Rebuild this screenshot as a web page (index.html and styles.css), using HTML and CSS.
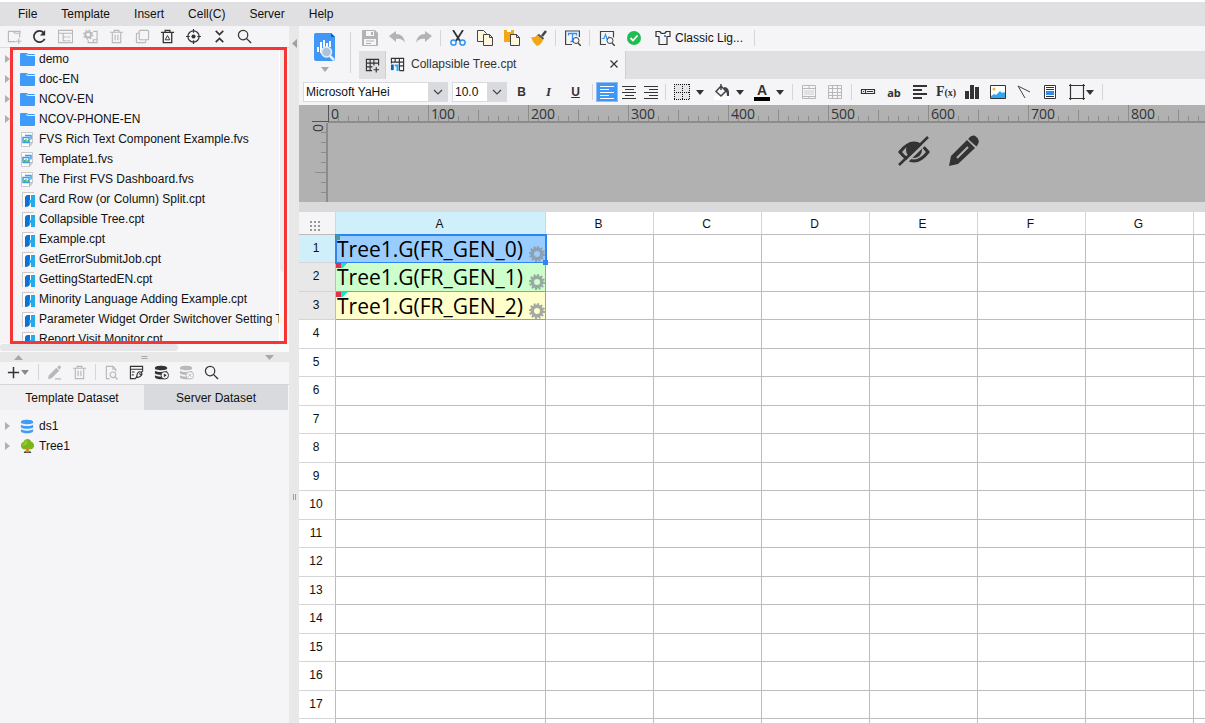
FILE: index.html
```
<!DOCTYPE html>
<html lang="en">
<head>
  <meta charset="UTF-8">
  <meta name="viewport" content="width=device-width, initial-scale=1.0">
  <title>Report Designer</title>
  <link rel="stylesheet" href="styles.css">
</head>
<body>
  <!-- shared icons -->
  <svg class="defs" width="0" height="0" aria-hidden="true">
    <symbol id="i-folder" viewBox="0 0 15 15"><path fill="#3f9bf9" d="M1 1h6l1 1h6q1 0 1 1v10q0 1-1 1H1q-1 0-1-1V2q0-1 1-1z"/><path stroke="#e8f2ff" fill="none" d="M6 2.500l2 1h7"/></symbol>
    <symbol id="i-fvs" viewBox="0 0 15 15"><path fill="#fff" stroke="#c9c9cb" d="M1.500.500h11v10l-3 4h-8z"/><path fill="#ddd" stroke="#bbb" d="M12.500 10.500h-3v4z"/><path fill="#fff" stroke="#38a1e8" stroke-width="1.500" d="M5 3.500h6v4M3 5.500h6v5H3z"/><path stroke="#51b351" stroke-width="1.300" d="M4.500 10V8M6 10V7M8 10V8"/></symbol>
    <symbol id="i-cpt" viewBox="0 0 15 15"><path fill="#fff" stroke="#c9c9cb" d="M14 .500H2.500V15"/><path fill="#0b73d1" d="M5 6q0-3 3-3h2v8q0 4-5 4z"/><path fill="#27a9ea" d="M11 3h4v12h-4v-4H9V8h2z"/></symbol>
    <symbol id="i-search" viewBox="0 0 16 16"><circle cx="6.500" cy="6.500" r="5" fill="none" stroke="currentColor" stroke-width="1.300"/><path stroke="currentColor" stroke-width="1.500" d="M10 10l5 5"/></symbol>
    <symbol id="i-trash" viewBox="0 0 16 16"><path fill="none" stroke="currentColor" stroke-width="1.200" d="M1 3.500h14M5.500 3V1.500h5V3M3.500 4v10.500h9V4M6.500 6v6M9.500 6v6"/></symbol>
    <symbol id="i-down" viewBox="0 0 8 5"><path fill="currentColor" d="M0 0h8L4 5z"/></symbol>
    <symbol id="i-chev" viewBox="0 0 10 6"><path fill="none" stroke="#444" stroke-width="1.200" d="M1 1l4 4 4-4"/></symbol>
    <symbol id="i-arrow" viewBox="0 0 5 8"><path fill="#b0b0b2" d="M0 0l5 4-5 4z"/></symbol>
    <symbol id="i-db" viewBox="0 0 16 16"><path fill="currentColor" d="M1 3c0-3 13-3 13 0v1c0 2-13 2-13 0zM1 6c2 2 11 2 13 0v3c-2 2-11 2-13 0zM1 11c2 2 11 2 13 0v2c-1 3-12 3-13 0z"/></symbol>
    <symbol id="i-gear" viewBox="0 0 16 16"><circle cx="8" cy="8" r="7" fill="none" stroke="#8d9599" stroke-width="2" stroke-dasharray="2 1.660" opacity=".8"/><circle cx="8" cy="8" r="4.700" fill="none" stroke="#8d9599" stroke-width="3.400" opacity=".8"/></symbol>
  </svg>

  <nav class="menubar">
    <button type="button">File</button>
    <button type="button">Template</button>
    <button type="button">Insert</button>
    <button type="button">Cell(C)</button>
    <button type="button">Server</button>
    <button type="button">Help</button>
  </nav>

  <div class="workspace">
    <aside class="sidebar">
      <div class="tree-tools">
        <button type="button" class="tool off" aria-label="New folder"><svg viewBox="0 0 16 16"><path fill="none" stroke="currentColor" stroke-width="1.200" d="M9 13.500H1.500v-11h5l2 2h5V9M6 2.500h8v2M12.500 10v6M9.500 13h6"/></svg></button>
        <button type="button" class="tool" aria-label="Refresh"><svg viewBox="0 0 16 16"><path fill="none" stroke="currentColor" stroke-width="1.800" d="M13.500 10.500A6 6 0 1 1 12.500 4"/><path fill="currentColor" d="M14 1v6H8.500z"/></svg></button>
        <button type="button" class="tool off" aria-label="Locate"><svg viewBox="0 0 16 16"><path fill="none" stroke="currentColor" stroke-width="1.200" d="M.5 1.500h15v13H.5zM1 4.500h14M5.500 5v7.500H9M6 8.500h3M10 8.500h3M10 12.500h3"/></svg></button>
        <button type="button" class="tool off" aria-label="Settings"><svg viewBox="0 0 16 16"><path fill="none" stroke="currentColor" stroke-width="1.200" d="M11 2.500h4v12H5.500V12M11 14.500v-3h3.500"/><circle cx="5.500" cy="6" r="3" fill="none" stroke="currentColor" stroke-width="2"/><circle cx="5.500" cy="6" r="4.700" fill="none" stroke="currentColor" stroke-width="1.600" stroke-dasharray="1.800 1.890"/></svg></button>
        <button type="button" class="tool off" aria-label="Delete"><svg><use href="#i-trash"/></svg></button>
        <button type="button" class="tool off" aria-label="Copy"><svg viewBox="0 0 16 16"><rect x="4.500" y="1.500" width="10" height="10" rx="1" fill="none" stroke="currentColor" stroke-width="1.200"/><path fill="none" stroke="currentColor" stroke-width="1.200" d="M4 4.500H2.500q-1 0-1 1v8q0 1 1 1h8q1 0 1-1V12"/></svg></button>
        <button type="button" class="tool" aria-label="Recycle bin"><svg viewBox="0 0 16 16"><path fill="none" stroke="currentColor" stroke-width="1.400" d="M1 3.500h14M5.500 3V1.500h5V3M3.500 4v10.500h9V4"/><path fill="none" stroke="currentColor" d="M8 7l2.500 4.500h-5z"/></svg></button>
        <button type="button" class="tool" aria-label="Target"><svg viewBox="0 0 16 16"><circle cx="8" cy="8" r="6" fill="none" stroke="currentColor" stroke-width="1.300"/><circle cx="8" cy="8" r="2.200" fill="currentColor"/><path stroke="currentColor" stroke-width="1.300" d="M8 0v4M8 12v4M0 8h4M12 8h4"/></svg></button>
        <button type="button" class="tool" aria-label="Collapse all"><svg viewBox="0 0 16 16"><path fill="none" stroke="currentColor" stroke-width="1.700" d="M4 2l4 4 4-4M4 14l4-4 4 4"/></svg></button>
        <button type="button" class="tool" aria-label="Search"><svg><use href="#i-search"/></svg></button>
      </div>

      <div class="file-tree">
        <ul class="tree">
          <li><svg class="exp"><use href="#i-arrow"/></svg><svg class="ico"><use href="#i-folder"/></svg>demo</li>
          <li><svg class="exp"><use href="#i-arrow"/></svg><svg class="ico"><use href="#i-folder"/></svg>doc-EN</li>
          <li><svg class="exp"><use href="#i-arrow"/></svg><svg class="ico"><use href="#i-folder"/></svg>NCOV-EN</li>
          <li><svg class="exp"><use href="#i-arrow"/></svg><svg class="ico"><use href="#i-folder"/></svg>NCOV-PHONE-EN</li>
          <li class="leaf"><svg class="ico"><use href="#i-fvs"/></svg>FVS Rich Text Component Example.fvs</li>
          <li class="leaf"><svg class="ico"><use href="#i-fvs"/></svg>Template1.fvs</li>
          <li class="leaf"><svg class="ico"><use href="#i-fvs"/></svg>The First FVS Dashboard.fvs</li>
          <li class="leaf"><svg class="ico"><use href="#i-cpt"/></svg>Card Row (or Column) Split.cpt</li>
          <li class="leaf"><svg class="ico"><use href="#i-cpt"/></svg>Collapsible Tree.cpt</li>
          <li class="leaf"><svg class="ico"><use href="#i-cpt"/></svg>Example.cpt</li>
          <li class="leaf"><svg class="ico"><use href="#i-cpt"/></svg>GetErrorSubmitJob.cpt</li>
          <li class="leaf"><svg class="ico"><use href="#i-cpt"/></svg>GettingStartedEN.cpt</li>
          <li class="leaf"><svg class="ico"><use href="#i-cpt"/></svg>Minority Language Adding Example.cpt</li>
          <li class="leaf"><svg class="ico"><use href="#i-cpt"/></svg>Parameter Widget Order Switchover Setting T</li>
          <li class="leaf"><svg class="ico"><use href="#i-cpt"/></svg>Report Visit Monitor.cpt</li>
        </ul>
        <div class="vscroll"><div class="vthumb"></div></div>
        <div class="highlight"></div>
      </div>
      <div class="hscroll"><div class="hthumb"></div></div>

      <div class="hsplit">
        <svg class="tri" viewBox="0 0 9 5"><path fill="#a8a8aa" d="M0 5h9L4.500 0z"/></svg>
        <svg class="tri" viewBox="0 0 9 5"><path stroke="#a8a8aa" d="M1.500 1.500h6M1.500 3.500h6"/></svg>
        <svg class="tri" viewBox="0 0 9 5"><path fill="#a8a8aa" d="M0 0h9L4.500 5z"/></svg>
      </div>

      <div class="data-tools">
        <button type="button" class="tool wide" aria-label="Add dataset"><svg viewBox="0 0 16 16"><path stroke="currentColor" stroke-width="1.600" d="M8 2v12M2 8h12"/></svg><svg class="caret"><use href="#i-down"/></svg></button>
        <span class="sep"></span>
        <button type="button" class="tool off" aria-label="Edit"><svg viewBox="0 0 16 16"><path fill="currentColor" d="M1 15l1-4 8-8 3 3-8 8zM11 2l1-1q1-1 2 0l1 1q0 1-1 2l-1 1zM9 14h6v1.500H8z"/></svg></button>
        <button type="button" class="tool off" aria-label="Delete"><svg><use href="#i-trash"/></svg></button>
        <span class="sep"></span>
        <button type="button" class="tool off" aria-label="Preview"><svg viewBox="0 0 16 16"><path fill="none" stroke="currentColor" stroke-width="1.200" d="M6 14.500H2.500v-13h7l3 3V7M9.500 1.500v3h3"/><circle cx="9.500" cy="10.500" r="3" fill="none" stroke="currentColor" stroke-width="1.200"/><path stroke="currentColor" stroke-width="1.400" d="M11.500 12.500l3 3"/></svg></button>
        <button type="button" class="tool" aria-label="Connection"><svg viewBox="0 0 16 16"><path fill="none" stroke="currentColor" stroke-width="1.200" d="M6 14.500H1.500v-13h13V6M2 4.500h12M3 7.500h3M3 10.500h2"/><path fill="none" stroke="currentColor" stroke-width="1.200" d="M9 9q2-3 4-1t-1 4-4 1zM13 8l2-2M11 9l2 2M6 15l3-3"/></svg></button>
        <button type="button" class="tool" aria-label="Cached data"><svg viewBox="0 0 16 16"><use href="#i-db" width="16" height="16"/><circle cx="11.500" cy="11" r="4" fill="#f5f5f7" stroke="currentColor"/><path fill="currentColor" d="M10.500 9l3 2-3 2z"/></svg></button>
        <button type="button" class="tool off" aria-label="Clear cache"><svg viewBox="0 0 16 16"><use href="#i-db" width="16" height="16"/><circle cx="11.500" cy="11" r="4" fill="#f5f5f7" stroke="currentColor"/><path stroke="currentColor" d="M10 9.500l3 3M13 9.500l-3 3"/></svg></button>
        <button type="button" class="tool" aria-label="Search"><svg><use href="#i-search"/></svg></button>
      </div>
      <div class="data-tabs">
        <button type="button" class="data-tab">Template Dataset</button>
        <button type="button" class="data-tab active">Server Dataset</button>
      </div>
      <ul class="tree data-list">
        <li><svg class="exp"><use href="#i-arrow"/></svg><svg class="ico blue"><use href="#i-db"/></svg>ds1</li>
        <li><svg class="exp"><use href="#i-arrow"/></svg><svg class="ico" viewBox="0 0 16 16"><path fill="#79b51c" d="M8 0q3 0 4 3 3 1 3 4t-3 4H4Q1 10 1 7t3-4q1-3 4-3z"/><path fill="#96cc2d" d="M7 1q-2 1-2 3-2 1-3 3 3 0 6-2z"/><path fill="#e08a1e" d="M6.500 10h3l1 4h-5z"/><path fill="#333" d="M5 13l1 0v2H4zM10 13h1l1 2h-2zM5 14h6v1H5z"/></svg>Tree1</li>
      </ul>
    </aside>

    <div class="vsplit">
      <svg viewBox="0 0 5 9"><path fill="#a0a0a2" d="M5 0v9L0 4.500z"/></svg>
      <svg viewBox="0 0 5 9"><path stroke="#a0a0a2" d="M1.500 2v6M3.500 2v6"/></svg>
    </div>

    <main class="editor">
      <header class="editor-head">
        <button type="button" class="preview-btn" aria-label="Preview report">
          <svg class="preview-ico" viewBox="0 0 22 29"><path fill="#3f97f8" d="M2 1h15l4 4v22q0 2-2 2H2q-2 0-2-2V3q0-2 2-2z"/><path fill="#0b62c4" d="M17 1v4h4z"/><path stroke="#fff" stroke-width="2" d="M4 20v-5M7 21V10M10 15V8M13 15v-4M16 15V9"/><circle cx="12.500" cy="20" r="5" fill="#a9c4de" stroke="#e9eef4" stroke-width="1.500"/><path stroke="#f2f2f2" stroke-width="2.500" d="M16 24l4 4"/></svg>
          <svg class="caret"><use href="#i-down"/></svg>
        </button>
        <div class="head-main">
          <div class="main-tools">
            <button type="button" class="tool gray" aria-label="Save"><svg viewBox="0 0 16 16"><path fill="currentColor" d="M1 0h12l3 3v12q0 1-1 1H1q-1 0-1-1V1q0-1 1-1z"/><path fill="#f5f5f7" d="M4 1h8v5H4zM2 9h12v6H2z"/><path fill="currentColor" d="M9 2h2v3H9zM4 10.500h8v1H4zM4 13h5v1H4z"/></svg></button>
            <button type="button" class="tool gray" aria-label="Undo"><svg viewBox="0 0 16 16"><path fill="currentColor" d="M0 6l7-5v3q8 0 9 9-3-5-9-4v3z"/></svg></button>
            <button type="button" class="tool gray" aria-label="Redo"><svg viewBox="0 0 16 16"><path fill="currentColor" d="M16 6L9 1v3Q1 4 0 13q3-5 9-4v3z"/></svg></button>
            <span class="sep"></span>
            <button type="button" class="tool" aria-label="Cut"><svg viewBox="0 0 16 16"><path stroke="#333" stroke-width="1.800" d="M3 0l7 11M13 0L6 11"/><circle cx="3.500" cy="12.500" r="2.600" fill="none" stroke="#2f93f5" stroke-width="1.500"/><circle cx="12.500" cy="12.500" r="2.600" fill="none" stroke="#2f93f5" stroke-width="1.500"/></svg></button>
            <button type="button" class="tool" aria-label="Copy"><svg viewBox="0 0 16 16"><path fill="#fff6df" stroke="#444" d="M.5.500h6l3 3v8h-9z"/><path fill="#fff6df" stroke="#444" d="M6.500 4.500h6l3 3v8h-9zM12.500 4.500v3h3"/></svg></button>
            <button type="button" class="tool" aria-label="Paste"><svg viewBox="0 0 16 16"><path fill="#f3a712" d="M0 0h10v12H0z"/><path fill="#fff" d="M3 0h4v2H3z"/><path fill="#fff6df" stroke="#444" d="M6.500 4.500h6l3 3v8h-9zM12.500 4.500v3h3"/></svg></button>
            <button type="button" class="tool" aria-label="Format painter"><svg viewBox="0 0 16 16"><path stroke="#444" stroke-width="2.500" d="M15 1l-4 5"/><path fill="#555" d="M8 4l5 4-1 2-6-5z"/><path fill="#f3a712" d="M6 5l6 5q-2 5-6 6-4-3-6-9 4 1 6-2z"/></svg></button>
            <span class="sep"></span>
            <button type="button" class="tool" aria-label="Find text"><svg viewBox="0 0 16 16"><path fill="none" stroke="#444" stroke-width="1.200" d="M7 14.500H.6V1h13.800v6"/><path fill="none" stroke="#2f93f5" stroke-width="1.300" d="M3.500 5.500v-2h8v2M7.500 3.500v8M5.500 11.500h3"/><circle cx="11" cy="10.500" r="3" fill="#f5f5f7" stroke="#444"/><path stroke="#444" stroke-width="1.500" d="M13 13l3 3"/></svg></button>
            <span class="sep"></span>
            <button type="button" class="tool" aria-label="Performance"><svg viewBox="0 0 16 16"><path fill="none" stroke="#444" stroke-width="1.200" d="M7 14.500H1.500v-13h13v6"/><path fill="none" stroke="#2f93f5" stroke-width="1.200" d="M3 8.500h2l1.500-4 2 6 1.500-4"/><circle cx="11" cy="10.500" r="3" fill="#f5f5f7" stroke="#444"/><path stroke="#444" stroke-width="1.500" d="M13 13l3 3"/></svg></button>
            <button type="button" class="tool" aria-label="Validate"><svg viewBox="0 0 16 16"><circle cx="8" cy="8" r="7" fill="#1fbd4f"/><path fill="none" stroke="#fff" stroke-width="1.800" d="M4.500 8l2.500 2.500 4.500-5"/></svg></button>
            <button type="button" class="theme-btn"><svg viewBox="0 0 16 16"><path fill="none" stroke="#333" stroke-width="1.200" d="M1 1.500h4q0 2 3 2t3-2h4v5h-3v8H4v-8H1z"/><path fill="#2f93f5" d="M9 5h2v2H9z"/></svg>Classic Lig...</button>
            <span class="sep"></span>
          </div>
          <div class="file-tabs">
            <button type="button" class="new-tab" aria-label="New template"><svg viewBox="0 0 16 16"><path fill="none" stroke="#333" stroke-width="1.200" d="M7.500 13.500h-6v-12h13V8M2 5.500h12M2 9.500h6M5.500 2v11M9.500 2v6M12 9.500v6M9 12.500h6"/></svg></button>
            <div class="file-tab">
              <svg viewBox="0 0 16 16"><path fill="none" stroke="#333" stroke-width="1.200" d="M1.500 7V1.500h13v13H10M2 5.500h12M5.500 2v4M10 2v12M10 9.500h4"/><path fill="#0b62c4" d="M1 8h3v6H1z"/><path fill="#27a9ea" d="M5 8h4v7H7v-5H5z"/></svg>
              <span>Collapsible Tree.cpt</span>
              <button type="button" class="close" aria-label="Close tab"><svg viewBox="0 0 8 8"><path stroke="#333" stroke-width="1.200" d="M.5.500l7 7M7.500.500l-7 7"/></svg></button>
            </div>
          </div>
        </div>
      </header>

      <div class="format-bar">
        <label class="combo font"><select aria-label="Font family"><option>Microsoft YaHei</option></select><svg><use href="#i-chev"/></svg></label>
        <label class="combo size"><select aria-label="Font size"><option>10.0</option></select><svg><use href="#i-chev"/></svg></label>
        <button type="button" class="fmt style"><b>B</b></button>
        <button type="button" class="fmt style"><i>I</i></button>
        <button type="button" class="fmt style"><u>U</u></button>
        <span class="sep"></span>
        <button type="button" class="align active" aria-label="Align left"><svg viewBox="0 0 16 14"><path stroke="#fff" d="M1 1.500h14M1 4.500h9M1 7.500h14M1 10.500h9M1 13.500h14"/></svg></button>
        <button type="button" class="align" aria-label="Align center"><svg viewBox="0 0 16 14"><path stroke="#333" d="M1 1.500h14M4 4.500h9M1 7.500h14M4 10.500h9M1 13.500h14"/></svg></button>
        <button type="button" class="align" aria-label="Align right"><svg viewBox="0 0 16 14"><path stroke="#333" d="M1 1.500h14M6 4.500h9M1 7.500h14M6 10.500h9M1 13.500h14"/></svg></button>
        <span class="sep"></span>
        <button type="button" class="drop" aria-label="Borders"><svg viewBox="0 0 16 16"><path fill="#e6e6e8" d="M0 0h16v16H0z"/><path fill="none" stroke="#111" stroke-dasharray="1 1" d="M0 .500h16M0 15.500h16M.5 0v16M15.500 0v16M0 8.500h16M8.500 0v16"/></svg><svg class="caret"><use href="#i-down"/></svg></button>
        <button type="button" class="drop" aria-label="Fill colour"><svg viewBox="0 0 16 16"><path fill="#fff" d="M0 12h16v4H0z"/><path fill="none" stroke="#444" stroke-width="1.500" d="M7 2L2 7.500l5 4.500 5-5zM7 0v6"/><path fill="#444" d="M10 3q6 0 5 9h-2q0-5-3-6z"/></svg><svg class="caret"><use href="#i-down"/></svg></button>
        <button type="button" class="drop" aria-label="Text colour"><span class="letter">A</span><svg class="caret"><use href="#i-down"/></svg></button>
        <span class="sep"></span>
        <button type="button" class="fmt off" aria-label="Merge cells"><svg viewBox="0 0 16 16"><path fill="none" stroke="currentColor" d="M1.500 1.500h13v13h-13zM2 4.500h12M8 2v2M8 12v2M2 12.500h12"/><path fill="#e2e2e4" d="M3 6h10v5H3z"/></svg></button>
        <button type="button" class="fmt off" aria-label="Unmerge cells"><svg viewBox="0 0 16 16"><path fill="none" stroke="currentColor" d="M1.500 1.500h13v13h-13zM2 4.500h12M2 8.500h12M2 11.500h12M5.500 2v12M10.500 2v12"/></svg></button>
        <span class="sep"></span>
        <button type="button" class="fmt" aria-label="Widget"><svg viewBox="0 0 16 16"><path fill="none" stroke="#333" stroke-width="1.200" d="M1.500 5.500h13v4h-13zM5.500 5.500v4M7 7.500h6M3 7.500h1"/></svg></button>
        <button type="button" class="fmt ab">ab</button>
        <button type="button" class="fmt" aria-label="Rich text"><svg viewBox="0 0 16 16"><path stroke="#333" stroke-width="2" d="M1 2h14M1 6h9M1 10h14M1 14h9"/></svg></button>
        <button type="button" class="fmt fx">F<small>(x)</small></button>
        <button type="button" class="fmt" aria-label="Chart"><svg viewBox="0 0 16 16"><path fill="#333" d="M1 7h4v8H1zM6 1h4v14H6zM11 3h4v12h-4z"/></svg></button>
        <button type="button" class="fmt" aria-label="Image"><svg viewBox="0 0 16 16"><path fill="#fff" stroke="#333" d="M.5 1.500h15v13H.5z"/><path fill="#2fa8f2" d="M1 12l3-2 2 1 4-4 2 2 2-1 1 1v5H1z"/><circle cx="4" cy="5" r="1.500" fill="#f3b52e"/></svg></button>
        <button type="button" class="fmt" aria-label="Slope line"><svg viewBox="0 0 16 16"><path fill="none" stroke="#444" d="M9 14L2 2l12 6"/></svg></button>
        <button type="button" class="fmt" aria-label="Sub report"><svg viewBox="0 0 16 16"><path fill="#fff" stroke="#333" d="M2.500 1.500h11v13h-11z"/><path stroke="#333" d="M4 3.500h8M4 5.500h8M4 12.500h8"/><path fill="#2f8ff0" d="M4 7h8v4H4z"/></svg></button>
        <button type="button" class="drop small" aria-label="Shape"><svg viewBox="0 0 16 16"><path fill="none" stroke="#333" stroke-width="1.200" d="M0 1.500h16M0 14.500h16M1.500 0v16M14.500 0v16"/></svg><svg class="caret"><use href="#i-down"/></svg></button>
        <span class="sep"></span>
      </div>

      <section class="param-pane">
        <div class="ruler-corner"></div>
        <div class="ruler-x">
          <span>0</span><span>100</span><span>200</span><span>300</span><span>400</span><span>500</span><span>600</span><span>700</span><span>800</span>
        </div>
        <div class="ruler-y"><span>0</span></div>
        <div class="param-body">
          <button type="button" class="big" aria-label="Hide parameters"><svg viewBox="0 0 32 32"><path fill="none" stroke="#333" stroke-width="3" d="M2 17q14-18 28 0-14 18-28 0z"/><circle cx="16" cy="15" r="8" fill="#333"/><path stroke="#b1b1b1" stroke-width="3" d="M5 30L32 4"/><path stroke="#333" stroke-width="2.500" d="M1 30L30 2"/></svg></button>
          <button type="button" class="big" aria-label="Edit parameters"><svg viewBox="0 0 32 32"><path fill="#333" d="M1 31l2-10L19 5l8 8-17 16zM20.500 3.500q4-5 8-1.500t1 8l-1 1.500-8-7z"/><path stroke="#b1b1b1" stroke-width="2" d="M9 23L20 12"/></svg></button>
        </div>
      </section>

      <section class="sheet-wrap">
        <table class="sheet">
          <colgroup><col class="c-num"><col class="c-a"><col class="c-n"><col class="c-n"><col class="c-n"><col class="c-n"><col class="c-n"><col class="c-n"><col></colgroup>
          <thead>
            <tr><th class="corner"><svg viewBox="0 0 12 10"><path stroke="#999" stroke-width="2" stroke-dasharray="2 2" d="M0 1h12M0 5h12M0 9h12"/></svg></th><th class="sel">A</th><th>B</th><th>C</th><th>D</th><th>E</th><th>F</th><th>G</th><th></th></tr>
          </thead>
          <tbody id="sheetBody">
            <tr><th class="sel">1</th><td class="data blue-cell"><div class="cell"><span>Tree1.G(FR_GEN_0)</span><svg><use href="#i-gear"/></svg></div><i class="mark"></i><i class="handle"></i></td><td></td><td></td><td></td><td></td><td></td><td></td><td></td></tr>
            <tr><th class="dim">2</th><td class="data green-cell"><div class="cell"><span>Tree1.G(FR_GEN_1)</span><svg><use href="#i-gear"/></svg></div><i class="mark"></i></td><td></td><td></td><td></td><td></td><td></td><td></td><td></td></tr>
            <tr><th class="dim">3</th><td class="data yellow-cell"><div class="cell"><span>Tree1.G(FR_GEN_2)</span><svg><use href="#i-gear"/></svg></div><i class="mark"></i></td><td></td><td></td><td></td><td></td><td></td><td></td><td></td></tr>
          </tbody>
        </table>
      </section>
    </main>
  </div>

  <script>
    // Fill the rest of the sheet with empty rows
    const sheetBody = document.getElementById('sheetBody');
    for (let n = 4; n <= 17; n++) {
      const row = document.createElement('tr');
      row.innerHTML = `<th>${n}</th>` + '<td></td>'.repeat(8);
      sheetBody.appendChild(row);
    }
    // trailing blank row
    const lastRow = document.createElement('tr');
    lastRow.innerHTML = '<th></th>' + '<td></td>'.repeat(8);
    sheetBody.appendChild(lastRow);
  </script>
</body>
</html>
```
FILE: styles.css
```
* {
  box-sizing: border-box;
}
body {
  margin: 0;
  padding-top: 2px;
  height: 100vh;
  display: flex;
  flex-direction: column;
  overflow: hidden;
  background: #fff;
  color: #111;
  font-family: "Liberation Sans", Arial, sans-serif;
  font-size: 12px;
}
button {
  margin: 0;
  padding: 0;
  border: none;
  background: none;
  color: inherit;
  font: inherit;
}
svg {
  flex: none;
  display: block;
}
.defs {
  position: absolute;
}
.menubar {
  flex: none;
  display: flex;
  height: 24px;
  padding-left: 6px;
  background: #e0e0e2;
}
.menubar button {
  padding: 0 12px;
}
.workspace {
  flex: 1;
  min-height: 0;
  display: flex;
}

/* sidebar */
.sidebar {
  flex: none;
  width: 289px;
  display: flex;
  flex-direction: column;
  background: #f5f5f7;
}
.tree-tools {
  display: flex;
  justify-content: space-between;
  height: 22px;
  padding: 0 32px 0 2px;
  border-bottom: 1px solid #dcdcde;
}
.tool {
  width: 24px;
  display: flex;
  align-items: center;
  justify-content: center;
  color: #333;
}
.tool svg {
  width: 15px;
  height: 15px;
}
.off {
  color: #b8b8ba;
}
.gray {
  color: #b3b3b5;
}
.sep {
  flex: none;
  width: 1px;
  height: 16px;
  margin: 0 3px;
  align-self: center;
  background: #d5d5d7;
}
.tool .caret,
.drop .caret,
.preview-btn .caret {
  width: 8px;
  height: 5px;
}
.tool .caret {
  color: #888;
}
.file-tree {
  position: relative;
  display: flex;
  height: 295px;
}
.tree {
  flex: 1;
  min-width: 0;
  margin: 0;
  padding: 1px 0 0;
  list-style: none;
  overflow: hidden;
  white-space: nowrap;
}
.tree li {
  display: flex;
  align-items: center;
  height: 20px;
  padding-left: 5px;
}
.tree .leaf {
  padding-left: 20px;
}
.exp {
  width: 5px;
  height: 8px;
  margin-right: 10px;
}
.ico {
  width: 15px;
  height: 15px;
  margin-right: 4px;
}
.blue {
  color: #3f9bf9;
}
.vscroll {
  width: 10px;
  border-left: 1px solid #fff;
  background: #f8f8fa;
}
.vthumb {
  width: 7px;
  height: 224px;
  border-radius: 3px;
  background: #ececee;
}
.highlight {
  position: absolute;
  inset: -1px 2px -1px 10px;
  border: 3px solid #f93434;
}
.hscroll {
  height: 9px;
  padding: 1px 0;
  background: #fafafa;
}
.hthumb {
  width: 178px;
  height: 7px;
  border-radius: 3px;
  background: #e6e6e8;
}
.hsplit {
  display: flex;
  align-items: center;
  justify-content: space-between;
  height: 10px;
  padding: 0 15px 0 14px;
  background: #e8e8e8;
}
.tri {
  width: 9px;
  height: 5px;
}
.data-tools {
  display: flex;
  height: 23px;
  padding: 0 0 2px 6px;
  border-bottom: 1px solid #d5d5d7;
}
.data-tools .tool {
  width: 25px;
}
.data-tools .wide {
  width: 29px;
  justify-content: flex-start;
}
.data-tabs {
  display: flex;
  height: 25px;
  padding-right: 1px;
}
.data-tab {
  flex: 1;
  background: #f0f0f2;
}
.data-tab.active {
  background: #d9dadd;
}
.data-list {
  padding-top: 6px;
}

/* splitter between the sidebar and the editor */
.vsplit {
  flex: none;
  width: 10px;
  display: grid;
  grid-template-rows: 9px 2fr 9px 1fr;
  justify-items: center;
  padding-top: 13px;
  background: #e8e8e8;
}
.vsplit svg {
  width: 5px;
  height: 9px;
}
.vsplit svg + svg {
  grid-row: 3;
}

/* editor */
.editor {
  flex: 1;
  min-width: 0;
  display: flex;
  flex-direction: column;
  background: #dadadc;
}
.editor-head {
  flex: none;
  display: flex;
  height: 53px;
  background: #f5f5f7;
}
.preview-btn {
  width: 52px;
  margin: 6px 5px 6px 0;
  border-right: 1px solid #d5d5d7;
  display: flex;
  flex-direction: column;
  align-items: center;
  gap: 6px;
  color: #a8a8aa;
}
.preview-ico {
  width: 22px;
  height: 29px;
}
.head-main {
  flex: 1;
  min-width: 0;
  display: flex;
  flex-direction: column;
}
.main-tools {
  display: flex;
  height: 25px;
  padding-bottom: 1px;
}
.main-tools .tool {
  width: 27px;
}
.main-tools .tool svg,
.theme-btn svg {
  width: 16px;
  height: 16px;
}
.theme-btn {
  display: flex;
  align-items: center;
  gap: 4px;
  padding: 0 8px;
}
.file-tabs {
  flex: 1;
  display: flex;
  margin-left: 3px;
  background: #e0e0e2;
}
.new-tab {
  width: 27px;
  display: flex;
  align-items: center;
  justify-content: center;
  border-right: 1px solid #cfcfd1;
}
.new-tab svg,
.file-tab > svg {
  width: 15px;
  height: 15px;
}
.file-tab {
  display: flex;
  align-items: center;
  gap: 6px;
  width: 240px;
  padding: 0 7px 2px 4px;
  border-right: 1px solid #cfcfd1;
  background: #f5f5f7;
  color: #333;
}
.close {
  margin-left: auto;
}
.close svg {
  width: 8px;
  height: 8px;
}
.format-bar {
  flex: none;
  display: flex;
  align-items: center;
  height: 26px;
  padding-left: 4px;
  background: #f5f5f7;
}
.combo {
  position: relative;
  height: 20px;
  margin-right: 4px;
}
.combo select {
  width: 100%;
  height: 100%;
  padding: 0 0 0 2px;
  border: 1px solid #d9dadd;
  border-radius: 0;
  appearance: none;
  background: linear-gradient(#d9dadd, #d9dadd) right / 19px 100% no-repeat #fff;
  color: #111;
  font: inherit;
}
.combo svg {
  position: absolute;
  top: 7px;
  right: 5px;
  width: 10px;
  height: 6px;
  pointer-events: none;
}
.font {
  width: 145px;
}
.size {
  width: 55px;
  margin-right: 1px;
}
.fmt,
.align,
.drop {
  flex: none;
  width: 26px;
  height: 20px;
  display: flex;
  align-items: center;
  justify-content: center;
}
.fmt {
  color: #333;
}
.style {
  width: 27px;
}
.fmt.off {
  color: #b8b8ba;
}
.fmt svg,
.drop svg {
  width: 16px;
  height: 16px;
}
.fmt i {
  font-family: "Liberation Serif", serif;
  font-weight: bold;
  font-size: 13px;
}
.fmt u {
  font-weight: bold;
}
.ab {
  font-family: "Open Sans", sans-serif;
  font-size: 11px;
  font-weight: bold;
}
.fx {
  font-family: "Liberation Serif", serif;
  font-size: 14px;
  font-weight: bold;
}
.fx small {
  font-size: 10px;
}
.align {
  width: 22px;
}
.align svg {
  width: 16px;
  height: 14px;
}
.align.active {
  border: 1px solid #8fbdf0;
  background: #3f97f8;
}
.drop {
  width: 40px;
  gap: 6px;
  color: #333;
}
.drop.small {
  width: 36px;
  gap: 1px;
}
.letter {
  width: 16px;
  border-bottom: 4px solid #000;
  font-size: 14px;
  font-weight: bold;
  line-height: 13px;
}

/* parameter pane with rulers */
.param-pane {
  flex: none;
  display: grid;
  grid-template-columns: 29px 1fr;
  grid-template-rows: 18px 79px;
  background: #b1b1b1;
  color: #333;
}
.ruler-corner {
  margin: 0 0 1px 13px;
  border-bottom: 1px solid #555;
}
.ruler-x {
  display: flex;
  overflow: hidden;
  border-left: 1px solid #555;
  border-bottom: 2px solid #8c8c8c;
  background:
    repeating-linear-gradient(90deg, transparent 0 99px, #8c8c8c 99px 100px),
    repeating-linear-gradient(90deg, transparent 0 49px, #8c8c8c 49px 50px, transparent 50px 100px) 0 5px no-repeat,
    repeating-linear-gradient(90deg, transparent 0 9px, #8c8c8c 9px 10px) 0 11px no-repeat;
}
.ruler-x span {
  flex: none;
  width: 100px;
  padding-left: 2px;
  font-family: "Open Sans", sans-serif;
  font-size: 14px;
  line-height: 18px;
}
.ruler-y {
  margin-left: 13px;
  border-right: 2px solid #8c8c8c;
  background:
    linear-gradient(#8c8c8c, #8c8c8c) right 49px / 11px 1px no-repeat,
    repeating-linear-gradient(transparent 0 9px, #8c8c8c 9px 10px) right / 5px 100% no-repeat;
}
.ruler-y span {
  display: block;
  height: 9px;
  width: 11px;
  font-family: "Open Sans", sans-serif;
  font-size: 14px;
  line-height: 11px;
  writing-mode: vertical-rl;
  transform: rotate(180deg);
}
.param-body {
  display: flex;
  align-items: flex-start;
  justify-content: center;
  gap: 18px;
  padding: 12px 0 0 344px;
}
.big svg {
  width: 32px;
  height: 32px;
}

/* sheet */
.sheet-wrap {
  flex: 1;
  min-height: 0;
  margin-top: 10px;
  overflow: hidden;
  background: #fff;
}
.sheet {
  width: 100%;
  table-layout: fixed;
  border-collapse: separate;
  border-spacing: 0;
}
.c-num {
  width: 37px;
}
.c-a {
  width: 210px;
}
.c-n {
  width: 108px;
}
.sheet th,
.sheet td {
  height: 29px;
  padding: 0;
  border-right: 1px solid #bcbcbc;
  border-bottom: 1px solid #bcbcbc;
  font-weight: normal;
}
.sheet tbody tr:nth-child(odd) > * {
  height: 28px;
}
.sheet thead th {
  height: 23px;
  padding: 2px 2px 0 0;
  border-right-color: #d5d5d7;
}
.sheet tbody th {
  border-bottom-color: #d5d5d7;
  padding: 0 2px 2px 0;
}
.sheet tr > :last-child {
  border-right: none;
}
.sheet .corner {
  background: #f5f5f7;
}
.corner svg {
  width: 12px;
  height: 10px;
  margin: 3px auto 0;
}
.sheet .sel {
  background: #cfeffa;
}
.sheet .dim {
  background: #e8e8e8;
}
.sheet .data {
  position: relative;
  border-color: #3cc8bd;
}
.cell {
  display: flex;
  align-items: flex-end;
  justify-content: space-between;
  height: 26px;
  padding-left: 1px;
}
.cell span {
  align-self: center;
  color: #000;
  font-family: "Open Sans", "Segoe UI", sans-serif;
  font-size: 21px;
  line-height: 26px;
}
.cell svg {
  width: 16px;
  height: 16px;
}
.blue-cell {
  background: #99ccff;
  outline: 2px solid #2f84ee;
  outline-offset: -1px;
}
.green-cell {
  background: #ccffcc;
}
.yellow-cell {
  background: #ffffcc;
}
/* expand direction marks in the cell corner */
.mark {
  position: absolute;
  top: 0;
  left: 0;
  width: 11px;
  height: 5px;
  background: linear-gradient(#e0314b, #e0314b) left / 5px 5px no-repeat, linear-gradient(135deg, #12e8c8 70%, transparent 70%);
}
.blue-cell .mark {
  width: 4px;
  background: #4a9a8c;
}
.handle {
  position: absolute;
  right: -3px;
  bottom: -3px;
  width: 5px;
  height: 5px;
  background: #2f84ee;
  z-index: 1;
}
```
